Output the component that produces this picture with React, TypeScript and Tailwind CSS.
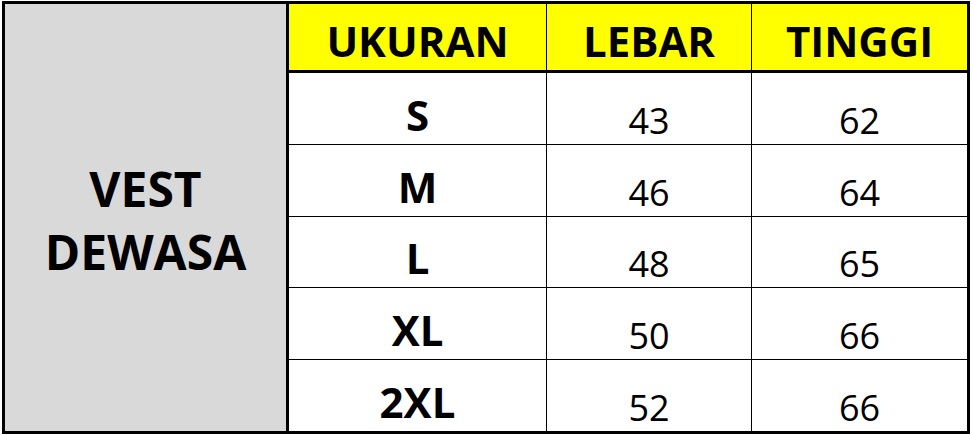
const ROWS = [
  { size: "S", lebar: 43, tinggi: 62 },
  { size: "M", lebar: 46, tinggi: 64 },
  { size: "L", lebar: 48, tinggi: 65 },
  { size: "XL", lebar: 50, tinggi: 66 },
  { size: "2XL", lebar: 52, tinggi: 66 },
];

const font = { fontFamily: '"Open Sans", "Liberation Sans", sans-serif' };

export default function App() {
  return (
    <div className="w-[973px] h-[435px] bg-white pt-px pl-[2px]" style={font}>
      <div className="flex w-[968px] h-[433px] border-[3px] border-black">
        {/* Left label */}
        <div className="w-[284px] shrink-0 bg-[#d9d9d9] border-r-[3px] border-black flex items-center justify-center">
          <div className="text-center text-[48px] font-bold leading-[63px] text-black pt-[4px]">
            <div>VEST</div>
            <div>DEWASA</div>
          </div>
        </div>

        {/* Table */}
        <div className="flex-1 flex flex-col">
          <div className="h-[69px] flex bg-[#ffff00] border-b-[3px] border-black shrink-0">
            <div className="w-[257px] flex items-end justify-center pb-[8px] text-[42px] font-bold leading-none text-black">
              UKURAN
            </div>
            <div className="w-[205px] border-l border-black flex items-end justify-center pb-[8px] text-[42px] font-bold leading-none text-black">
              LEBAR
            </div>
            <div className="flex-1 border-l border-black flex items-end justify-center pb-[8px] text-[42px] font-bold leading-none text-black">
              TINGGI
            </div>
          </div>
          {ROWS.map((r, i) => (
            <div
              key={r.size}
              className={`flex-1 flex ${i > 0 ? "border-t border-black" : ""}`}
            >
              <div className="w-[257px] flex items-end justify-center pb-[8px] text-[42px] font-bold leading-none text-black">
                {r.size}
              </div>
              <div className="w-[205px] border-l border-black flex items-end justify-center pb-[5px] text-[36px] leading-none text-black">
                {r.lebar}
              </div>
              <div className="flex-1 border-l border-black flex items-end justify-center pb-[5px] text-[36px] leading-none text-black">
                {r.tinggi}
              </div>
            </div>
          ))}
        </div>
      </div>
    </div>
  );
}
